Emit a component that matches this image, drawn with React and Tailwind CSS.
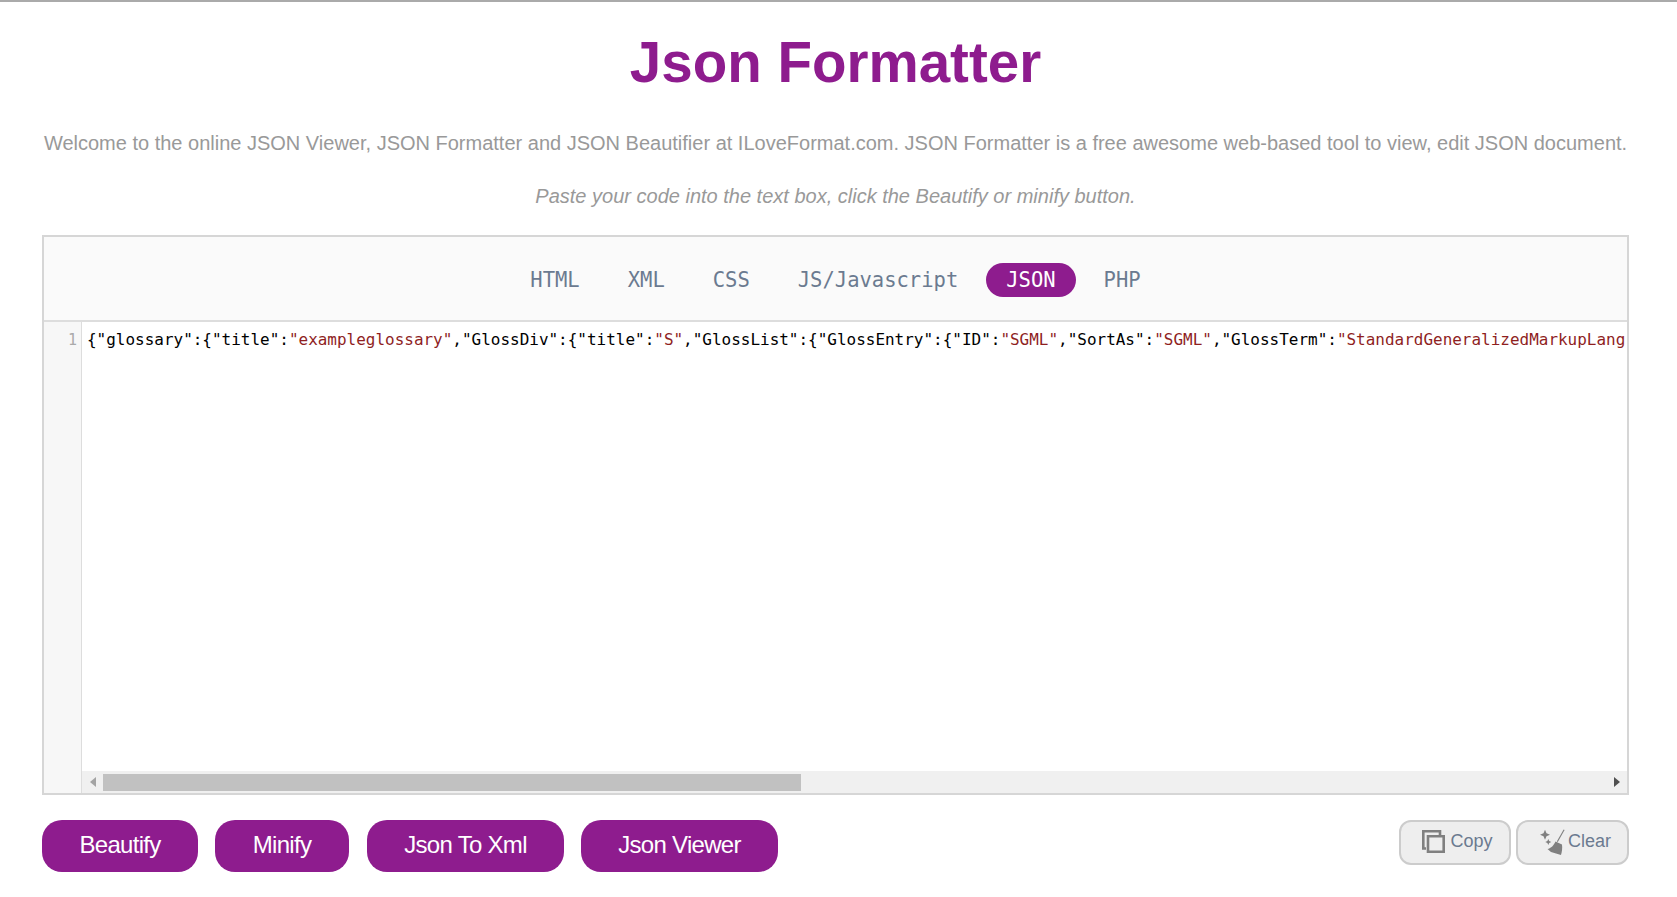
import React from 'react';

const sans = "font-['Liberation_Sans',Arial,sans-serif]";
const mono = "font-['DejaVu_Sans_Mono','Liberation_Mono',monospace]";

const tabs = ['HTML', 'XML', 'CSS', 'JS/Javascript', 'JSON', 'PHP'];
const actions = [
    { label: 'Beautify', width: 'w-[156px]' },
    { label: 'Minify', width: 'w-[134px] mr-[1px]' },
    { label: 'Json To Xml', width: 'w-[197px]' },
    { label: 'Json Viewer', width: 'w-[197px]' },
];

function Str({ children }) {
    return <span className="text-[#8f1f1f]">{children}</span>;
}

function CopyIcon() {
    return (
        <svg width="23" height="23" viewBox="0 0 23 23" fill="none" stroke="#808080" strokeWidth="2.6">
            <path d="M4 18.500H1.300V1.300H18V5" />
            <path d="M6 6.300h15.700v15.400H6z" />
        </svg>
    );
}

function BroomIcon() {
    return (
        <svg width="25" height="26" viewBox="0 0 25 26" fill="#808080">
            <path d="M23.600 .5l1 .6-6.800 12-1-.6z" />
            <path d="M15.500 12.500L22 15.500C22.500 19 22 23 21 26L16 24.500 11 23 7.500 20C11 19.500 14 16 15.500 12.500z" />
            <path d="M5 .7l1.500 3.500L10 5.700 6.500 7.200 5 10.700 3.500 7.200 0 5.700 3.500 4.200z" />
            <path d="M8.300 10l.9 2.100 2.100.9-2.100.9-.9 2.100-.9-2.100-2.100-.9 2.100-.9z" />
        </svg>
    );
}

export default function App() {
    return (
        <div className={`${sans} h-[897px] overflow-hidden bg-white border-t-2 border-[#aaaaaa] pl-[42px] pr-[48px]`}>
            <h1 className="text-center text-[56.500px] leading-[64px] font-bold text-[#8e1c8e] mt-[29px]">Json Formatter</h1>
            <p className="text-center text-[20px] leading-[24px] text-[#999999] mt-[36px] whitespace-nowrap">
                Welcome to the online JSON Viewer, JSON Formatter and JSON Beautifier at ILoveFormat.com. JSON Formatter is a free awesome web-based tool to view, edit JSON document.
            </p>
            <p className="text-center text-[20px] leading-[24px] italic text-[#999999] mt-[29px]">
                Paste your code into the text box, click the Beautify or minify button.
            </p>

            <div className="mt-[27px] h-[560px] border-2 border-[#d6d6d6] flex flex-col">
                <div className={`${mono} h-[85px] shrink-0 pt-[2px] bg-[#fafafa] border-b-2 border-[#dddddd] flex items-center justify-center gap-[8px] text-[20.500px] text-[#6b7a90]`}>
                    {tabs.map(tab => (
                        <span
                            key={tab}
                            className={tab === 'JSON'
                                ? 'h-[34px] leading-[34px] px-[20px] rounded-full bg-[#8e1c8e] text-white'
                                : 'px-[20px] leading-[34px] h-[34px]'}
                        >
                            {tab}
                        </span>
                    ))}
                </div>
                <div className="flex-1 flex min-h-0">
                    <div className={`${mono} w-[38px] shrink-0 bg-[#f7f7f7] border-r border-[#dddddd] text-right pr-[4px] pt-[6px] text-[15px] leading-[24px] text-[#aaaaaa]`}>1</div>
                    <div className="flex-1 min-w-0 flex flex-col">
                        <div className={`${mono} flex-1 whitespace-nowrap pl-[5px] pt-[6px] text-[15.970px] leading-[24px] text-black`}>
                            {'{"glossary":{"title":'}<Str>"exampleglossary"</Str>{',"GlossDiv":{"title":'}<Str>"S"</Str>{',"GlossList":{"GlossEntry":{"ID":'}<Str>"SGML"</Str>{',"SortAs":'}<Str>"SGML"</Str>{',"GlossTerm":'}<Str>"StandardGeneralizedMarkupLang</Str>
                        </div>
                        <div className="h-[22px] shrink-0 bg-[#f0f0f0] flex items-center">
                            <div className="w-[21px] flex justify-center">
                                <div className="border-y-[5px] border-y-transparent border-r-[6px] border-r-[#a3a3a3]" />
                            </div>
                            <div className="w-[698px] h-[17px] bg-[#c1c1c1]" />
                            <div className="flex-1" />
                            <div className="w-[21px] flex justify-center">
                                <div className="border-y-[5px] border-y-transparent border-l-[6px] border-l-[#505050]" />
                            </div>
                        </div>
                    </div>
                </div>
            </div>

            <div className="mt-[25px] flex items-start justify-between">
                <div className="flex gap-[17px]">
                    {actions.map(action => (
                        <button key={action.label} className={`${action.width} h-[52px] pb-[2px] rounded-[20px] bg-[#8e1c8e] text-white text-[24px] tracking-[-0.7px]`}>
                            {action.label}
                        </button>
                    ))}
                </div>
                <div className="flex gap-[5px]">
                    <button className="w-[112px] h-[45px] pb-[2px] pl-[5px] rounded-[12px] bg-[#eeeeee] border-2 border-[#cccccc] flex items-center justify-center gap-[5px] text-[18px] text-[#6b7a90]">
                        <CopyIcon />Copy
                    </button>
                    <button className="w-[113px] h-[45px] pb-[2px] pl-[6px] rounded-[12px] bg-[#eeeeee] border-2 border-[#cccccc] flex items-center justify-center gap-[3px] text-[18px] text-[#6b7a90]">
                        <BroomIcon />Clear
                    </button>
                </div>
            </div>
        </div>
    );
}
